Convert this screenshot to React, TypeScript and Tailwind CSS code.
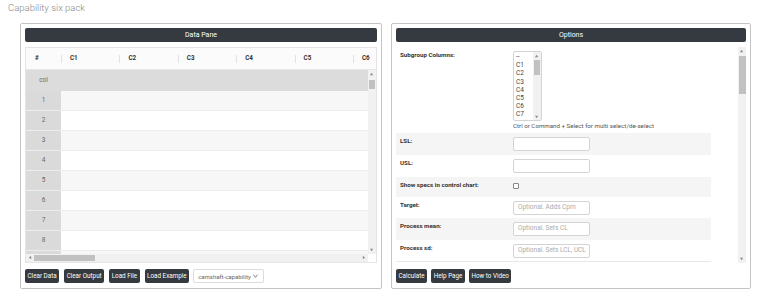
import React from "react";

const cols = ["C1", "C2", "C3", "C4", "C5", "C6"];
const rows = [1, 2, 3, 4, 5, 6, 7, 8, 9];
const listItems = ["--", "C1", "C2", "C3", "C4", "C5", "C6", "C7", "C8"];

function Arrow({ dir }: { dir: "up" | "down" | "left" | "right" }) {
  const pts = {
    up: "0,4 2,1 4,4",
    down: "0,1 2,4 4,1",
    left: "4,0 1,2 4,4",
    right: "1,0 4,2 1,4",
  }[dir];
  return (
    <svg width="4" height="4" viewBox="0 0 5 5" className="block">
      <polygon points={pts} fill="#8a8a8a" />
    </svg>
  );
}

function DarkButton({ label }: { label: string }) {
  return (
    <button className="h-[14px] px-[2.5px] rounded-[2px] bg-[#343a40] text-white text-[6.3px] leading-[14px] whitespace-nowrap">
      {label}
    </button>
  );
}

function PaneHeader({ title }: { title: string }) {
  return (
    <div className="h-[14px] rounded-[2px] bg-[#343a40] text-white text-[7px] flex items-center justify-center">
      {title}
    </div>
  );
}

function DataPane() {
  return (
    <div className="w-[362px] h-[266px] border border-[#c4c4c4] rounded-[2px] p-[4px] flex flex-col">
      <PaneHeader title="Data Pane" />
      <div className="mt-[5px] h-[216px] border border-[#e4e4e4] flex flex-col overflow-hidden">
        {/* column header */}
        <div className="h-[22px] shrink-0 flex items-center bg-[#fbfbfb] border-b border-[#e6e6e6] text-[6.3px] font-bold text-[#333] overflow-hidden">
          <div className="w-[35px] shrink-0 pl-[9px]">#</div>
          {cols.map((c) => (
            <div key={c} className="w-[58.4px] shrink-0 flex items-center">
              <span className="w-px h-[8px] bg-[#e2e2e2]" />
              <span className="pl-[8px]">{c}</span>
            </div>
          ))}
        </div>
        {/* body */}
        <div className="flex-1 min-h-0 flex">
          <div className="flex-1 min-w-0 overflow-hidden flex flex-col">
            <div className="h-[21px] shrink-0 flex bg-[#dcdcdc]">
              <div className="w-[35px] flex items-center justify-center text-[6.5px] text-[#666]">col</div>
            </div>
            {rows.map((r) => (
              <div
                key={r}
                className={`h-[20px] shrink-0 flex border-b border-[#ececec] ${r % 2 === 1 ? "bg-[#f7f7f7]" : "bg-white"}`}
              >
                <div className="w-[35px] shrink-0 bg-[#dadada] flex items-center justify-center text-[6.5px] text-[#666]">
                  {r}
                </div>
                <div className="flex-1" />
              </div>
            ))}
          </div>
          <div className="w-[8px] shrink-0 bg-[#f1f1f1] flex flex-col items-center">
            <div className="h-[8px] flex items-center"><Arrow dir="up" /></div>
            <div className="mt-[2px] w-[6px] h-[9px] bg-[#c1c1c1]" />
            <div className="flex-1" />
            <div className="h-[8px] flex items-center"><Arrow dir="down" /></div>
          </div>
        </div>
        <div className="h-[8px] shrink-0 flex">
          <div className="flex-1 bg-[#f1f1f1] flex items-center">
            <div className="w-[8px] flex justify-center"><Arrow dir="left" /></div>
            <div className="h-[6px] w-[61px] bg-[#c1c1c1]" />
            <div className="flex-1" />
            <div className="w-[8px] flex justify-center"><Arrow dir="right" /></div>
          </div>
          <div className="w-[8px] bg-white" />
        </div>
      </div>
      <div className="mt-[6px] flex items-center gap-[5px]">
        <DarkButton label="Clear Data" />
        <DarkButton label="Clear Output" />
        <DarkButton label="Load File" />
        <DarkButton label="Load Example" />
        <div className="ml-[-1px] h-[14px] w-[71px] border border-[#dcdcdc] rounded-[2px] bg-white flex items-center justify-between pl-[4px] pr-[5px] text-[6px] text-[#666]">
          <span>camshaft-capability</span>
          <svg width="5" height="4" viewBox="0 0 6 4"><path d="M0.5 0.8 L3 3.2 L5.5 0.8" fill="none" stroke="#444" strokeWidth="1" /></svg>
        </div>
      </div>
    </div>
  );
}

function OptionRow({ label, shaded, h, children }: { label: string; shaded?: boolean; h: string; children?: React.ReactNode }) {
  return (
    <div className={`${h} shrink-0 flex ${shaded ? "bg-[#f5f5f5]" : "bg-white"}`}>
      <div className="w-[117px] shrink-0 pl-[4px] pt-[4px] text-[6.2px] leading-[9px] font-bold text-[#333]">{label}</div>
      <div className="flex-1">{children}</div>
    </div>
  );
}

function TextInput({ placeholder }: { placeholder?: string }) {
  return (
    <div className="mt-[4px] w-[77px] h-[14px] border border-[#d4d4d4] rounded-[2px] bg-white flex items-center pl-[4px] text-[6.5px] text-[#aaa] whitespace-nowrap overflow-hidden">
      {placeholder}
    </div>
  );
}

function OptionsPane() {
  return (
    <div className="w-[360px] h-[266px] border border-[#c4c4c4] rounded-[2px] p-[4px] flex flex-col">
      <PaneHeader title="Options" />
      <div className="mt-[5px] h-[216px] flex">
        <div className="w-[315px] flex flex-col">
          <OptionRow label="Subgroup Columns:" h="h-[86px]">
            <div className="mt-[4px] w-[29px] h-[70px] border border-[#d4d4d4] rounded-[2px] bg-white flex overflow-hidden">
              <div className="flex-1 h-full overflow-hidden pl-[2px] pt-[1px] text-[6.5px] leading-[8.2px] text-[#444]">
                {listItems.map((i) => (
                  <div key={i}>{i}</div>
                ))}
              </div>
              <div className="w-[8px] bg-[#f1f1f1] flex flex-col items-center">
                <div className="h-[7px] flex items-center"><Arrow dir="up" /></div>
                <div className="mt-[1px] w-[6px] h-[15px] bg-[#c1c1c1]" />
                <div className="flex-1" />
                <div className="h-[7px] flex items-center"><Arrow dir="down" /></div>
              </div>
            </div>
            <div className="mt-[1px] text-[6.2px] leading-[9px] text-[#555] whitespace-nowrap">
              Ctrl or Command + Select for multi select/de-select
            </div>
          </OptionRow>
          <OptionRow label="LSL:" shaded h="h-[22px]">
            <TextInput />
          </OptionRow>
          <OptionRow label="USL:" h="h-[22px]">
            <TextInput />
          </OptionRow>
          <OptionRow label="Show specs in control chart:" shaded h="h-[20px]">
            <div className="mt-[6px] w-[6px] h-[6px] border border-[#888] rounded-[1px] bg-white" />
          </OptionRow>
          <OptionRow label="Target:" h="h-[21px]">
            <TextInput placeholder="Optional. Adds Cpm" />
          </OptionRow>
          <OptionRow label="Process mean:" shaded h="h-[22px]">
            <TextInput placeholder="Optional. Sets CL" />
          </OptionRow>
          <div className="border-b border-[#e8e8e8]">
            <OptionRow label="Process sd:" h="h-[21px]">
              <TextInput placeholder="Optional. Sets LCL, UCL" />
            </OptionRow>
          </div>
        </div>
        <div className="flex-1" />
        <div className="w-[8px] bg-[#f1f1f1] flex flex-col items-center">
          <div className="h-[8px] flex items-center"><Arrow dir="up" /></div>
          <div className="mt-[1px] w-[7px] h-[38px] bg-[#c1c1c1]" />
          <div className="flex-1" />
          <div className="h-[8px] flex items-center"><Arrow dir="down" /></div>
        </div>
      </div>
      <div className="mt-[6px] flex items-center gap-[4px]">
        <DarkButton label="Calculate" />
        <DarkButton label="Help Page" />
        <DarkButton label="How to Video" />
      </div>
    </div>
  );
}

export default function App() {
  return (
    <div className="w-[768px] h-[303px] bg-white overflow-hidden font-['Roboto',sans-serif]">
      <div className="h-[23px] pl-[8px] pt-[1px] text-[9.5px] leading-[14px] font-light text-[#888]">
        Capability six pack
      </div>
      <div className="flex pl-[20px] gap-[9px]">
        <DataPane />
        <OptionsPane />
      </div>
    </div>
  );
}
